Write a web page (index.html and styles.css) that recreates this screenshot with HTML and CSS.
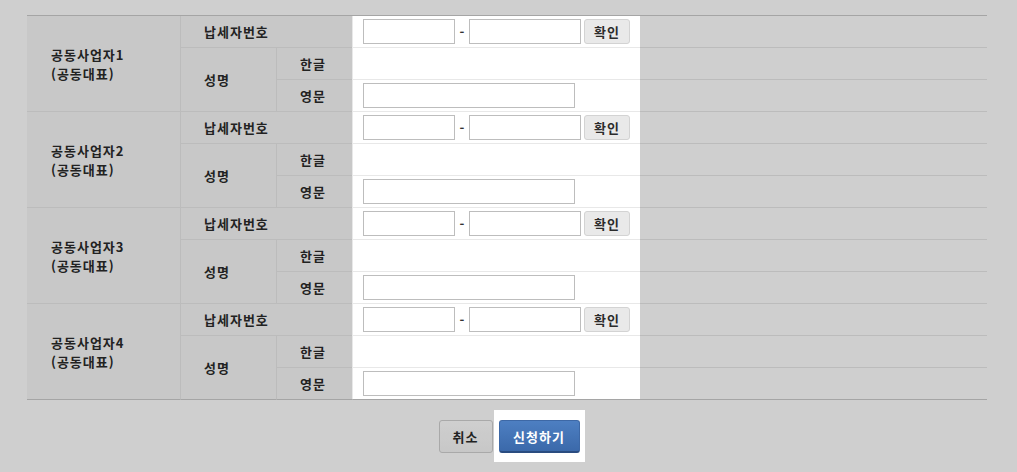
FILE: index.html
```html
<!DOCTYPE html>
<html lang="ko">
<head>
<meta charset="utf-8">
<title>공동사업자 등록</title>
<link rel="stylesheet" href="styles.css">
</head>
<body>
<div class="page">
  <table class="form">
    <colgroup>
      <col class="c-owner"><col class="c-label"><col class="c-sub"><col>
    </colgroup>
    <tbody class="group">
      <tr>
        <th rowspan="3" class="owner">공동사업자1<br>(공동대표)</th>
        <th colspan="2" class="label">납세자번호</th>
        <td class="field"><div class="bizno"><input class="in-a" type="text"><span class="dash">-</span><input class="in-b" type="text"><button class="check" type="button">확인</button></div></td>
      </tr>
      <tr>
        <th rowspan="2" class="label">성명</th>
        <th class="sub">한글</th>
        <td class="field"></td>
      </tr>
      <tr>
        <th class="sub">영문</th>
        <td class="field"><input class="in-name" type="text"></td>
      </tr>
    </tbody>
    <tbody class="group">
      <tr>
        <th rowspan="3" class="owner">공동사업자2<br>(공동대표)</th>
        <th colspan="2" class="label">납세자번호</th>
        <td class="field"><div class="bizno"><input class="in-a" type="text"><span class="dash">-</span><input class="in-b" type="text"><button class="check" type="button">확인</button></div></td>
      </tr>
      <tr>
        <th rowspan="2" class="label">성명</th>
        <th class="sub">한글</th>
        <td class="field"></td>
      </tr>
      <tr>
        <th class="sub">영문</th>
        <td class="field"><input class="in-name" type="text"></td>
      </tr>
    </tbody>
    <tbody class="group">
      <tr>
        <th rowspan="3" class="owner">공동사업자3<br>(공동대표)</th>
        <th colspan="2" class="label">납세자번호</th>
        <td class="field"><div class="bizno"><input class="in-a" type="text"><span class="dash">-</span><input class="in-b" type="text"><button class="check" type="button">확인</button></div></td>
      </tr>
      <tr>
        <th rowspan="2" class="label">성명</th>
        <th class="sub">한글</th>
        <td class="field"></td>
      </tr>
      <tr>
        <th class="sub">영문</th>
        <td class="field"><input class="in-name" type="text"></td>
      </tr>
    </tbody>
    <tbody class="group">
      <tr>
        <th rowspan="3" class="owner">공동사업자4<br>(공동대표)</th>
        <th colspan="2" class="label">납세자번호</th>
        <td class="field"><div class="bizno"><input class="in-a" type="text"><span class="dash">-</span><input class="in-b" type="text"><button class="check" type="button">확인</button></div></td>
      </tr>
      <tr>
        <th rowspan="2" class="label">성명</th>
        <th class="sub">한글</th>
        <td class="field"></td>
      </tr>
      <tr>
        <th class="sub">영문</th>
        <td class="field"><input class="in-name" type="text"></td>
      </tr>
    </tbody>
  </table>
  <div class="actions">
    <button class="btn cancel" type="button">취소</button>
    <button class="btn submit" type="button">신청하기</button>
  </div>
</div>
<div class="dim">
  <svg class="dim-svg" width="1017" height="472" viewBox="0 0 1017 472">
    <path fill-rule="evenodd" fill="rgba(0,0,0,0.19)" d="M0 0H1017V472H0Z M352 16H640V399H352Z M494 410H585V462H494Z"/>
  </svg>
</div>
</body>
</html>
```

FILE: styles.css
```css
html, body {
  margin: 0;
  padding: 0;
  background: #fff;
}

body {
  font-family: "Noto Sans CJK KR", "Noto Sans", sans-serif;
  font-size: 13px;
  color: #333;
  width: 1017px;
  height: 472px;
  overflow: hidden;
}

.page {
  padding: 15px 30px 0 27px;
}

.form {
  width: 960px;
  table-layout: fixed;
  border-collapse: separate;
  border-spacing: 0;
  border-top: 1px solid #ccc;
}

.c-owner { width: 154px; }
.c-label { width: 96px; }
.c-sub { width: 76px; }

.form tr {
  height: 32px;
}

.form th,
.form td {
  padding: 0;
  border-bottom: 1px solid #e8e8e8;
  vertical-align: middle;
  text-align: left;
}

.form th {
  background: #f7f7f7;
  border-right: 1px solid #e8e8e8;
  font-weight: bold;
  font-size: 13px;
  line-height: 16px;
  letter-spacing: 1px;
  color: #2b2b2b;
}

.form th.owner {
  padding-left: 24px;
  line-height: 19px;
}

.form th.label,
.form th.sub {
  padding-left: 23px;
}

.group:last-child th[rowspan],
.group:last-child tr:last-child > th,
.group:last-child tr:last-child > td {
  border-bottom-color: #ccc;
}

.form td.field {
  padding: 0 10px;
  background: #fff;
}

.bizno {
  display: flex;
  align-items: center;
}

input {
  display: block;
  box-sizing: border-box;
  height: 25px;
  margin: 0;
  padding: 0 4px;
  border: 1px solid #bdbdbd;
  border-radius: 0;
  background: #fff;
  font: inherit;
}

.in-a { width: 92px; }
.in-b { width: 112px; }
.in-name { width: 212px; }

.dash {
  width: 14px;
  text-align: center;
  line-height: 25px;
  font-size: 13px;
  font-weight: bold;
  color: #333;
}

.check {
  box-sizing: border-box;
  width: 46px;
  height: 25px;
  margin-left: 3px;
  padding: 0;
  border: 1px solid #d3d3d3;
  border-radius: 3px;
  background: #e9e9e9;
  color: #2b2b2b;
  font-family: inherit;
  font-size: 13px;
  font-weight: bold;
  letter-spacing: 1px;
}

.actions {
  display: flex;
  justify-content: center;
  gap: 6px;
  margin: 20px 0 0 0;
  padding-left: 4px;
}

.btn {
  box-sizing: border-box;
  height: 33px;
  padding: 0;
  border-radius: 3px;
  font-family: inherit;
  font-size: 13px;
  font-weight: bold;
  letter-spacing: 1px;
}

.cancel {
  width: 54px;
  border: 1px solid #d0d0d0;
  background: linear-gradient(#ffffff, #f6f6f6);
  color: #2b2b2b;
}

.submit {
  width: 81px;
  border: 1px solid #3d68a6;
  border-bottom: 2px solid #2a4c80;
  background: linear-gradient(#4d7fc2, #3b69aa);
  color: #fff;
}

.dim {
  position: fixed;
  left: 0;
  top: 0;
  pointer-events: none;
}

.dim-svg {
  display: block;
}
```
